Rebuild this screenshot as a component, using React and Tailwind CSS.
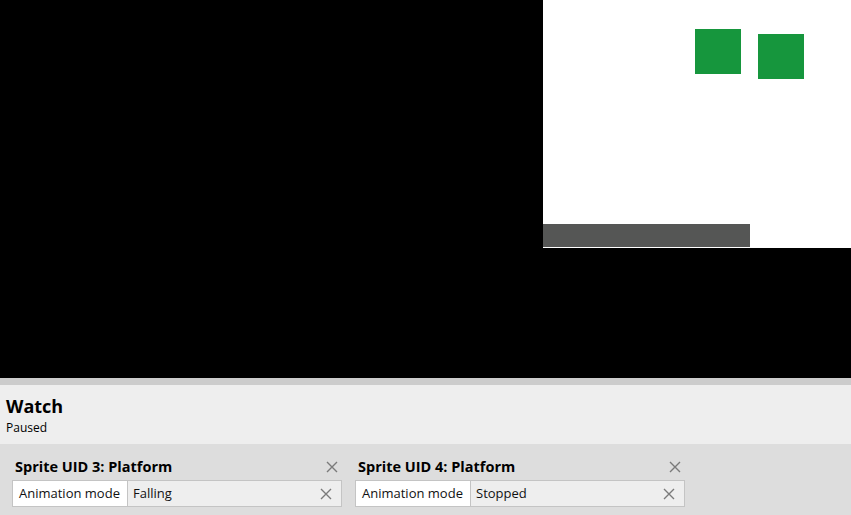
function CloseIcon() {
  return (
    <svg width="12" height="12" viewBox="0 0 12 12" className="text-[#7a7a7a]">
      <path d="M1 1L11 11M11 1L1 11" stroke="currentColor" strokeWidth="1.4" fill="none" />
    </svg>
  )
}

function WatchCard({ title, label, value }) {
  return (
    <div className="w-[330px]">
      <div className="flex items-center justify-between pl-[3px] pr-[4px] h-[36px] pt-[10px]">
        <span className="text-[14.5px] font-bold text-black leading-none">{title}</span>
        <CloseIcon />
      </div>
      <div className="flex h-[27px] border border-[#c4c4c4] text-[13px] text-[#111]">
        <div className="w-[115px] bg-white border-r border-[#c4c4c4] flex items-center pl-[6px]">{label}</div>
        <div className="flex-1 bg-[#eeeeee] flex items-center justify-between pl-[5px] pr-[9px]">
          <span>{value}</span>
          <CloseIcon />
        </div>
      </div>
    </div>
  )
}

export default function App() {
  return (
    <div className="w-[851px] h-[515px] overflow-hidden flex flex-col bg-[#dddddd]" style={{ fontFamily: '"Open Sans", "Noto Sans", sans-serif' }}>
      {/* game view */}
      <div className="h-[378px] bg-black flex justify-end">
        <div className="w-[308px] h-[248px] bg-white relative">
          <div className="absolute left-[152px] top-[29px] w-[46px] h-[45px] bg-[#16963d]" />
          <div className="absolute left-[215px] top-[34px] w-[46px] h-[45px] bg-[#16963d]" />
          <div className="absolute left-0 top-[224px] w-[207px] h-[23px] bg-[#555655]" />
        </div>
      </div>
      <div className="h-[7px] bg-[#cccccc]" />
      {/* watch header */}
      <div className="h-[59px] bg-[#eeeeee] px-[6px] pt-[9px]">
        <div className="text-[18px] font-bold text-black leading-[24px]">Watch</div>
        <div className="text-[12px] text-black leading-[16px] mt-[2px]">Paused</div>
      </div>
      <div className="flex gap-[13px] pl-[12px]">
        <WatchCard title="Sprite UID 3: Platform" label="Animation mode" value="Falling" />
        <WatchCard title="Sprite UID 4: Platform" label="Animation mode" value="Stopped" />
      </div>
    </div>
  )
}
